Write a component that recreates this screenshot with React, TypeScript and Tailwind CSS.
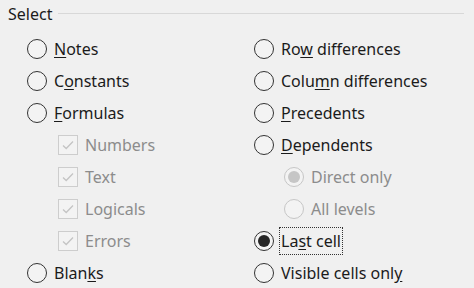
import React from "react";

type RadioProps = { label: React.ReactNode; checked?: boolean; disabled?: boolean; focus?: boolean };

function Radio({ label, checked, disabled, focus }: RadioProps) {
  return (
    <div className="flex items-center h-[32px]">
      <span
        className={`w-[20px] h-[20px] rounded-full border-[1.5px] flex items-center justify-center shrink-0 bg-[#f3f3f3] ${
          disabled ? "border-[#c6c6c6]" : "border-[#333333]"
        }`}
      >
        {checked && (
          <span className={`w-[12px] h-[12px] rounded-full ${disabled ? "bg-[#c6c6c6]" : "bg-[#262626]"}`} />
        )}
      </span>
      <span
        className={`ml-[6px] px-[1px] ${focus ? "leading-[26px]" : "leading-[22px]"} ${
          disabled ? "text-[#8c8c8c]" : "text-[#1b1b1b]"
        } ${focus ? "outline-1 outline-dotted outline-[#333333]" : ""}`}
      >
        {label}
      </span>
    </div>
  );
}

function Check({ label }: { label: string }) {
  return (
    <div className="flex items-center h-[32px]">
      <span className="w-[20px] h-[20px] border border-[#cdcdcd] flex items-center justify-center shrink-0 bg-[#f3f3f3]">
        <svg width="14" height="14" viewBox="0 0 14 14" fill="none">
          <path d="M2 7.5l3.2 3L12 3.5" stroke="#c4c4c4" strokeWidth="1.3" />
        </svg>
      </span>
      <span className="ml-[7px] text-[#8c8c8c]">{label}</span>
    </div>
  );
}

const U = ({ children }: { children: string }) => <span className="underline underline-offset-2">{children}</span>;

export default function App() {
  return (
    <div
      className="w-[474px] h-[288px] bg-[#f0f0f0] relative overflow-hidden text-[16px]"
      style={{ fontFamily: '"Noto Sans", "Open Sans", sans-serif' }}
    >
      <div className="absolute left-[58px] right-[10px] top-[13px] border-t border-[#d8d8d8]" />
      <div className="absolute left-[8px] top-[3px] text-[#1b1b1b] leading-[22px] bg-[#f0f0f0] pr-1">Select</div>
      <div className="flex pt-[33px]">
        <div className="w-[227px] pl-[27px]">
          <Radio label={<><U>N</U>otes</>} />
          <Radio label={<>C<U>o</U>nstants</>} />
          <Radio label={<><U>F</U>ormulas</>} />
          <div className="pl-[31px]">
            <Check label="Numbers" />
            <Check label="Text" />
            <Check label="Logicals" />
            <Check label="Errors" />
          </div>
          <Radio label={<>Blan<U>k</U>s</>} />
        </div>
        <div className="pl-[27px]">
          <Radio label={<>Ro<U>w</U> differences</>} />
          <Radio label={<>Colu<U>m</U>n differences</>} />
          <Radio label={<><U>P</U>recedents</>} />
          <Radio label={<><U>D</U>ependents</>} />
          <div className="pl-[30px]">
            <Radio label="Direct only" checked disabled />
            <Radio label="All levels" disabled />
          </div>
          <Radio label={<>La<U>s</U>t cell</>} checked focus />
          <Radio label={<>Visible cells onl<U>y</U></>} />
        </div>
      </div>
    </div>
  );
}
